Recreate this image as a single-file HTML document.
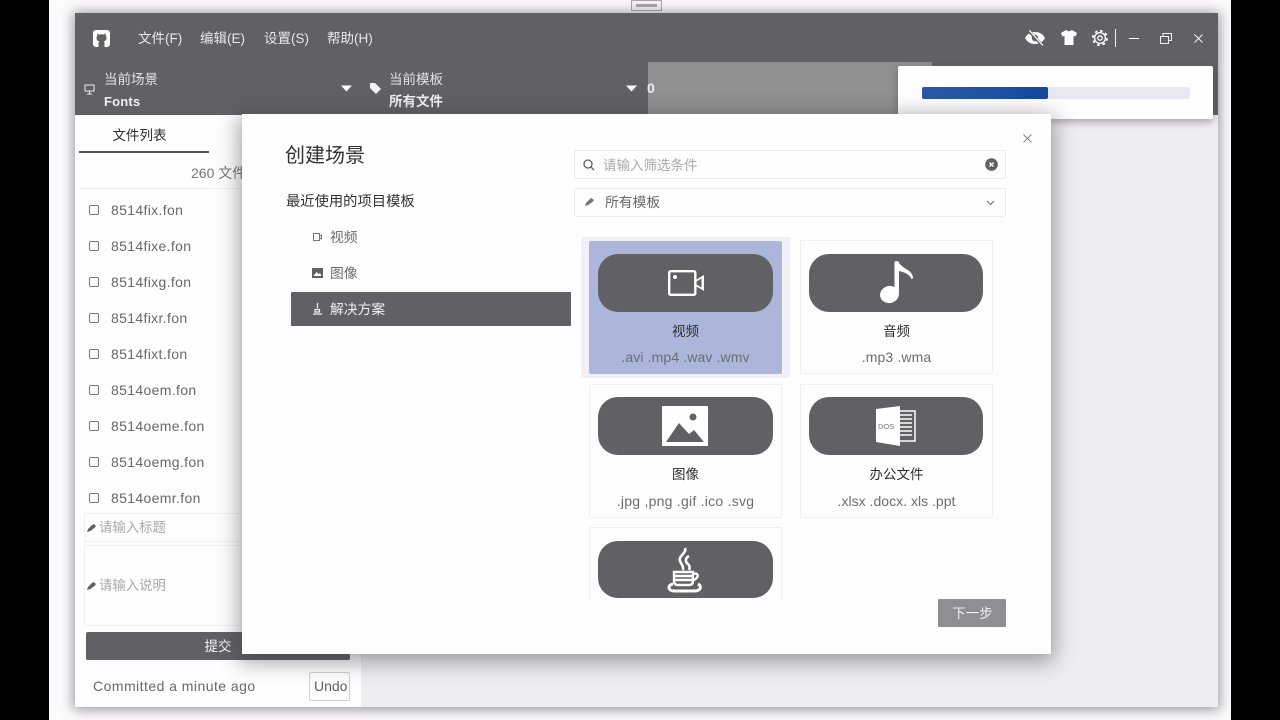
<!DOCTYPE html>
<html><head><meta charset="utf-8"><style>
*{box-sizing:border-box}
html,body{margin:0;padding:0;width:1280px;height:720px;overflow:hidden;background:#000;font-family:"Liberation Sans","Noto Sans CJK SC",sans-serif}
.a{position:absolute;white-space:nowrap}
svg{position:absolute;overflow:visible}
.f{left:111px;font-size:14px;color:#69686c;line-height:20px;letter-spacing:.34px}
.c{left:89px;width:10px;height:10px;border:1px solid #77767a;border-radius:2px}
.card{position:absolute;width:193px;height:134px;background:#fefdff;border:1px solid #f0eef2;border-radius:2px}
.pill{position:absolute;left:8px;top:12px;width:175px;height:58px;background:#616065;border-radius:20px}
.t1{position:absolute;left:0;width:100%;top:80px;text-align:center;font-size:13.5px;line-height:20px;color:#2c2c30}
.t2{position:absolute;left:0;width:100%;top:105px;text-align:center;font-size:14px;line-height:20px;color:#6d6c70;letter-spacing:.12px}
.m{top:30px;font-size:13.5px;color:#e8e7ea;line-height:18px}
</style></head><body>
<div class="a" style="left:49px;top:0;width:1182px;height:720px;background:#fdfbfe"></div>
<div class="a" style="left:631px;top:0;width:31px;height:11px;background:#f6f5f8;border:1px solid #a8a7ab"></div>
<div class="a" style="left:636px;top:4px;width:21px;height:3px;background:#a9a8ac"></div>

<div class="a" style="left:75px;top:13px;width:1143px;height:694px;background:#f0edf2;box-shadow:0 1px 12px 2px rgba(60,60,65,.5)"></div>
<div class="a" style="left:75px;top:13px;width:1143px;height:102px;background:#616065"></div>
<div class="a" style="left:75px;top:115px;width:286px;height:592px;background:#fefdff"></div>
<div class="a" style="left:361px;top:115px;width:857px;height:592px;background:#f0edf2"></div>

<svg style="left:93px;top:30px" width="17" height="17" viewBox="0 0 17 17"><path fill="#fff" fill-rule="evenodd" d="M3 0H14A3 3 0 0 1 17 3V14A3 3 0 0 1 14 17H11.500V13.500C11.500 12.300 11 11.800 10.500 11.500 12.500 11.200 13.500 10 13.500 8 13.500 7 13.200 6.300 12.700 5.700 12.900 5 12.800 4.300 12.600 3.800 11.900 3.800 11.200 4.100 10.600 4.600A7 7 0 0 0 6.400 4.600C5.800 4.100 5.100 3.800 4.400 3.800 4.200 4.300 4.100 5 4.300 5.700 3.800 6.300 3.500 7 3.500 8 3.500 10 4.500 11.200 6.500 11.500 6 11.800 5.500 12.300 5.500 13.500V17H3A3 3 0 0 1 0 14V3A3 3 0 0 1 3 0Z"/></svg>
<div class="a m" style="left:138px">文件(F)</div>
<div class="a m" style="left:200px">编辑(E)</div>
<div class="a m" style="left:264px">设置(S)</div>
<div class="a m" style="left:327px">帮助(H)</div>

<svg style="left:1025px;top:29px" width="20" height="18" viewBox="0 0 20 18"><path fill="#fff" d="M0 9C2.500 4.500 6 3 10 3S17.500 4.500 20 9C17.500 13.500 14 15 10 15S2.500 13.500 0 9Z"/><circle cx="10" cy="9" r="3.200" fill="#616065"/><path stroke="#616065" stroke-width="3" d="M4 2L17 16"/><path stroke="#fff" stroke-width="1.300" d="M4.500 1.500L18 16.500"/></svg>
<svg style="left:1061px;top:30px" width="16" height="15" viewBox="0 0 16 15"><path fill="#fff" d="M5 0L8 1.500 11 0 16 3 14.500 6.500 12.500 6V15H3.500V6L1.500 6.500 0 3Z"/></svg>
<svg style="left:1092px;top:30px" width="16" height="16" viewBox="0 0 16 16"><circle cx="8" cy="8" r="5.400" fill="none" stroke="#fff" stroke-width="1.300"/><circle cx="8" cy="8" r="2.200" fill="none" stroke="#fff" stroke-width="1.300"/><path stroke="#fff" stroke-width="1.800" stroke-dasharray="2.600 2.980" fill="none" d="M8 .9A7.100 7.100 0 1 1 7.900 .9"/></svg>
<div class="a" style="left:1115px;top:29px;width:1px;height:18px;background:#f2f2f2"></div>
<div class="a" style="left:1129px;top:38px;width:10px;height:1px;background:#fff"></div>
<svg style="left:1160px;top:33px" width="12" height="11" viewBox="0 0 12 11"><path fill="none" stroke="#eee" d="M.5 3.500H8.500V10.500H.5ZM3 3.500V.5H11.500V7.500H8.500"/></svg>
<svg style="left:1194px;top:34px" width="9" height="9" viewBox="0 0 9 9"><path stroke="#f4f4f4" stroke-width="1" d="M.5 .5L8.500 8.500M8.500 .5L.5 8.500"/></svg>

<svg style="left:84px;top:84px" width="11" height="11" viewBox="0 0 11 11"><path fill="none" stroke="#eee" d="M1 1H10V7H1ZM5.500 7V9.500M3 10H8"/></svg>
<div class="a" style="left:104px;top:71px;font-size:13.500px;line-height:18px;color:#e3e2e5">当前场景</div>
<div class="a" style="left:104px;top:93px;font-size:13px;line-height:18px;color:#f0eff2;font-weight:bold;letter-spacing:.2px">Fonts</div>
<svg style="left:341px;top:85px" width="11" height="7" viewBox="0 0 11 7"><path fill="#fff" d="M0 .5H11L5.500 6.500Z"/></svg>
<svg style="left:370px;top:83px" width="11" height="11" viewBox="0 0 11 11"><path fill="#f4f4f4" d="M0 0H5L11 6 6 11 0 5Z"/></svg>
<div class="a" style="left:389px;top:71px;font-size:13.500px;line-height:18px;color:#e3e2e5">当前模板</div>
<div class="a" style="left:389px;top:93px;font-size:13.500px;line-height:18px;color:#f0eff2;font-weight:bold">所有文件</div>
<svg style="left:626px;top:85px" width="11" height="7" viewBox="0 0 11 7"><path fill="#fff" d="M0 .5H11L5.500 6.500Z"/></svg>
<div class="a" style="left:647px;top:79px;font-size:14px;line-height:18px;color:#e8e7ea;font-weight:bold">0</div>
<div class="a" style="left:648px;top:62px;width:284px;height:52px;background:rgba(255,255,255,.3)"></div>

<div class="a" style="left:79px;top:126px;width:121px;text-align:center;font-size:13.500px;line-height:20px;color:#2e2e32">文件列表</div>
<div class="a" style="left:79px;top:151px;width:130px;height:2px;background:#56555a"></div>
<div class="a" style="left:191px;top:163px;font-size:14px;line-height:20px;color:#77767a">260 文件</div>
<div class="a" style="left:79px;top:188px;width:180px;height:1px;background:#f0eef2"></div>

<div class="a c" style="top:205px"></div><div class="a f" style="top:200px">8514fix.fon</div>
<div class="a c" style="top:241px"></div><div class="a f" style="top:236px">8514fixe.fon</div>
<div class="a c" style="top:277px"></div><div class="a f" style="top:272px">8514fixg.fon</div>
<div class="a c" style="top:313px"></div><div class="a f" style="top:308px">8514fixr.fon</div>
<div class="a c" style="top:349px"></div><div class="a f" style="top:344px">8514fixt.fon</div>
<div class="a c" style="top:385px"></div><div class="a f" style="top:380px">8514oem.fon</div>
<div class="a c" style="top:421px"></div><div class="a f" style="top:416px">8514oeme.fon</div>
<div class="a c" style="top:457px"></div><div class="a f" style="top:452px">8514oemg.fon</div>
<div class="a c" style="top:493px"></div><div class="a f" style="top:488px">8514oemr.fon</div>

<div class="a" style="left:84px;top:513px;width:170px;height:29px;border:1px solid #f0eef2"></div>
<div class="a" style="left:84px;top:545px;width:170px;height:81px;border:1px solid #f0eef2"></div>
<svg style="left:87px;top:524px" width="9" height="8" viewBox="0 0 9 8"><path fill="#616065" d="M0 8L1 5 5 1 6.500 0 9 2 8 3.500 3.500 7Z"/></svg>
<div class="a" style="left:99px;top:519px;font-size:13.400px;line-height:18px;color:#a9a8ac">请输入标题</div>
<svg style="left:87px;top:582px" width="9" height="8" viewBox="0 0 9 8"><path fill="#616065" d="M0 8L1 5 5 1 6.500 0 9 2 8 3.500 3.500 7Z"/></svg>
<div class="a" style="left:99px;top:577px;font-size:13.400px;line-height:18px;color:#a9a8ac">请输入说明</div>
<div class="a" style="left:86px;top:632px;width:264px;height:28px;background:#616065;border-radius:2px;text-align:center;font-size:13.500px;line-height:29px;color:#f4f3f6">提交</div>
<div class="a" style="left:93px;top:677px;font-size:14px;line-height:18px;color:#69686c;letter-spacing:.46px">Committed a minute ago</div>
<div class="a" style="left:309px;top:672px;width:41px;height:29px;border:1px solid #cfced2;border-radius:2px;font-size:14px;line-height:27px;color:#616065;padding-left:4px">Undo</div>

<div class="a" style="left:898px;top:66px;width:315px;height:53px;background:#fefdff;border-radius:2px;box-shadow:0 3px 8px rgba(50,50,55,.4)"></div>
<div class="a" style="left:922px;top:87px;width:268px;height:12px;background:#e9e7f1"></div>
<div class="a" style="left:922px;top:87px;width:126px;height:12px;background:linear-gradient(90deg,#2a58a8,#1f52a4 60%,#12479a);border-radius:2px"></div>

<div class="a" style="left:242px;top:114px;width:809px;height:540px;background:#fefdff;box-shadow:0 5px 20px 3px rgba(50,50,55,.45)"></div>
<svg style="left:1023px;top:134px" width="9" height="9" viewBox="0 0 9 9"><path stroke="#85848a" stroke-width="1" d="M.5 .5L8.500 8.500M8.500 .5L.5 8.500"/></svg>
<div class="a" style="left:285px;top:143px;font-size:20px;line-height:26px;color:#333236">创建场景</div>
<div class="a" style="left:286px;top:192px;font-size:14.300px;line-height:20px;color:#333236">最近使用的项目模板</div>

<svg style="left:313px;top:233px" width="9" height="8" viewBox="0 0 9 8"><path fill="none" stroke="#77767a" d="M.5 .5H6.500V7.500H.5ZM6.500 3L8.500 2V6L6.500 5"/></svg>
<div class="a" style="left:330px;top:229px;font-size:13.800px;line-height:18px;color:#69686c">视频</div>
<svg style="left:312px;top:268px" width="11" height="10" viewBox="0 0 11 10"><path fill="#616065" d="M0 0H11V10H0Z"/><path fill="#fff" d="M1.500 8L4.500 4 6.500 6 8 5 9.500 8Z"/></svg>
<div class="a" style="left:330px;top:265px;font-size:13.800px;line-height:18px;color:#69686c">图像</div>
<div class="a" style="left:291px;top:292px;width:280px;height:34px;background:#616065;border-radius:1px"></div>
<svg style="left:313px;top:303px" width="9" height="12" viewBox="0 0 9 12"><path fill="none" stroke="#eee" stroke-width="1.200" d="M5 0C3 2 6 3 4 5M2 6.500V9H6.500V6.500ZM0 11H9"/></svg>
<div class="a" style="left:330px;top:301px;font-size:13.800px;line-height:18px;color:#f0eff2">解决方案</div>

<div class="a" style="left:574px;top:150px;width:432px;height:29px;border:1px solid #ecebef;border-radius:2px;background:#fefdff"></div>
<svg style="left:583px;top:159px" width="12" height="12" viewBox="0 0 12 12"><circle cx="5" cy="5" r="4" fill="none" stroke="#616065" stroke-width="1.300"/><path stroke="#616065" stroke-width="1.300" d="M8 8L11 11"/></svg>
<div class="a" style="left:603px;top:157px;font-size:13.500px;line-height:18px;color:#a9a8ac">请输入筛选条件</div>
<svg style="left:985px;top:158px" width="13" height="13" viewBox="0 0 13 13"><circle cx="6.500" cy="6.500" r="6.300" fill="#616065"/><path stroke="#fff" stroke-width="1.300" d="M4.500 4.500L8.500 8.500M8.500 4.500L4.500 8.500"/></svg>
<div class="a" style="left:574px;top:188px;width:432px;height:29px;border:1px solid #ecebef;border-radius:2px;background:#fefdff"></div>
<svg style="left:585px;top:198px" width="9" height="8" viewBox="0 0 9 8"><path fill="#77767a" d="M0 8L1 5 5 1 6.500 0 9 2 8 3.500 3.500 7Z"/></svg>
<div class="a" style="left:605px;top:194px;font-size:13.800px;line-height:18px;color:#69686c">所有模板</div>
<svg style="left:986px;top:200px" width="9" height="6" viewBox="0 0 9 6"><path fill="none" stroke="#77767a" stroke-width="1.200" d="M1 1L4.500 4.500 8 1"/></svg>

<div class="a" style="left:581px;top:237px;width:209px;height:141px;background:#f2f0f7"></div>
<div class="card" style="left:589px;top:241px;height:133px;background:#abb6da;border-color:#abb6da"><div class="pill"></div><div class="t1" style="top:80px">视频</div><div class="t2" style="top:105px">.avi .mp4 .wav .wmv</div>
<svg style="left:78px;top:28px" width="37" height="27" viewBox="0 0 37 27"><path fill="none" stroke="#fff" stroke-width="2.400" d="M1.200 3Q1.200 1.200 3 1.200H25.500Q27.300 1.200 27.300 3V23Q27.300 24.800 25.500 24.800H3Q1.200 24.800 1.200 23Z"/><circle cx="7" cy="7" r="2" fill="#fff"/><path fill="#fff" d="M28.500 9.500L36 5V21L28.500 16.500V14.500L33.500 17.500V8.500L28.500 11.500Z"/></svg></div>
<div class="card" style="left:800px;top:240px"><div class="pill" style="top:13px;left:8px;width:174px"></div><div class="t1" style="top:81px">音频</div><div class="t2" style="top:106px">.mp3 .wma</div>
<svg style="left:79px;top:20px" width="36" height="44" viewBox="0 0 36 44"><ellipse cx="9.500" cy="33.500" rx="9.500" ry="8.500" fill="#fff" transform="rotate(-15 9.500 33.500)"/><path fill="#fff" d="M14.500 33V1.500Q14.500 0 16 0L18.500 .5C20 5 25 7 28.500 9.500 32 12 33 15 33 17.500L31.500 18C30 13.500 24 11 19 10V33Z"/></svg></div>

<div class="card" style="left:589px;top:384px;height:134px"><div class="pill"></div><div class="t1" style="top:80px">图像</div><div class="t2" style="top:106px;letter-spacing:.25px">.jpg ,png .gif .ico .svg</div>
<svg style="left:72px;top:21px" width="46" height="40" viewBox="0 0 46 40"><path fill="#fefdff" d="M0 0H46V40H0Z"/><circle cx="31" cy="11" r="3.500" fill="#616065"/><path fill="#616065" d="M4 36L17 17 27 28 32 24 42 36Z"/></svg></div>
<div class="card" style="left:800px;top:384px"><div class="pill" style="width:174px"></div><div class="t1" style="top:80px">办公文件</div><div class="t2" style="top:106px;letter-spacing:.02px">.xlsx .docx. xls .ppt</div>
<svg style="left:75px;top:21px" width="40" height="40" viewBox="0 0 40 40"><path fill="#fefdff" d="M0 3L24 0V40L0 36Z"/><text x="2" y="23" font-size="7.500" fill="#77767a" font-family="Liberation Sans,sans-serif">DOS</text><path fill="none" stroke="#fefdff" stroke-width="1.500" d="M24 5H39V35H24M24 9H36M24 13H36M24 17H36M24 21H36M24 25H36M24 29H36"/></svg></div>

<div class="a" style="left:589px;top:527px;width:193px;height:72px;overflow:hidden;border:1px solid #f0eef2;border-bottom:0;border-radius:2px 2px 0 0;background:#fefdff"><div class="pill" style="top:13px;height:57px"></div>
<svg style="left:78px;top:19px" width="36" height="46" viewBox="0 0 36 46"><path fill="none" stroke="#fff" stroke-width="2.600" d="M17 1C19 6 10 9 12 14 13 17 16 19 15 23M21 9C17 11 17 15 20 17 22 19 22 21 21 23"/><path fill="none" stroke="#fff" stroke-width="2.400" d="M6 25H25V34Q25 38 21 38H10Q6 38 6 34ZM6 29H25M6 33H25M25 27C30 25 32 30 26 33"/><path fill="none" stroke="#fff" stroke-width="3" d="M5 37C-1 38 0 44 6 44H26C33 44 34 39 30 37"/></svg></div>

<div class="a" style="left:938px;top:599px;width:68px;height:28px;background:#8f8e93;border-radius:1px;text-align:center;font-size:13.500px;line-height:29px;color:#f0eff2;padding-left:1px">下一步</div>
</body></html>
